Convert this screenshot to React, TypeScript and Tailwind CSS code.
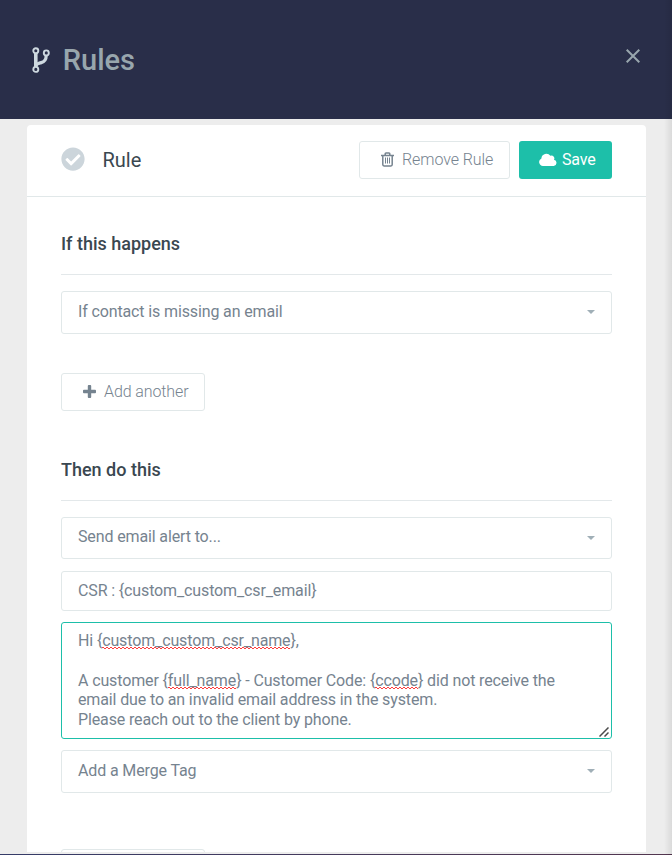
import type { ReactNode } from "react";
import { FaCheckCircle } from "react-icons/fa";

function BranchIcon() {
    return (
        <svg width="18" height="26" viewBox="0 0 18 26" fill="none" stroke="#ced9e0" className="shrink-0">
            <circle cx="3.8" cy="3.8" r="2.5" strokeWidth="1.9" />
            <circle cx="14.3" cy="5.9" r="2.5" strokeWidth="1.9" />
            <circle cx="3.8" cy="22.4" r="2.5" strokeWidth="1.9" />
            <path d="M3.8 6v14" strokeWidth="3.6" />
            <path d="M14.2 8.4c0 4.2-1.6 6.2-5 7.2-2.4.7-4.6 1-5.4 3" strokeWidth="3.2" />
        </svg>
    );
}

function TrashIcon() {
    return (
        <svg width="13" height="15" viewBox="0 0 13 15" fill="none" stroke="#75838f" strokeWidth="1.5" className="shrink-0">
            <path d="M0 3.5h13M4.2 3V1.7q0-.8.8-.8h3q.8 0 .8.8V3M1.8 3.6v9q0 1.4 1.2 1.4h7q1.2 0 1.2-1.4v-9" />
            <path d="M4.5 5.5v6M6.5 5.5v6M8.5 5.5v6" strokeWidth="1" />
        </svg>
    );
}

function CloudIcon() {
    return (
        <svg width="18" height="13" viewBox="0 0 18 13" fill="#fff" className="mb-px shrink-0">
            <path d="M4 13a4 4 0 0 1-1.6-7.6A5 5 0 0 1 11.4 2.8a2.8 2.8 0 0 1 3.6 3.9A3.2 3.2 0 0 1 14.7 13z" />
        </svg>
    );
}

function PlusIcon() {
    return (
        <svg width="13" height="13" viewBox="0 0 13 13" fill="#75838f" className="mb-0.5 shrink-0">
            <path d="M5.7 0h1.6q.9 0 .9.9v3.9h3.9q.9 0 .9.9v1.6q0 .9-.9.9H8.2v3.9q0 .9-.9.9H5.7q-.9 0-.9-.9V8.2H.9q-.9 0-.9-.9V5.7q0-.9.9-.9h3.9V.9q0-.9.9-.9z" />
        </svg>
    );
}

function SelectBox({ label, className }: { label: string; className: string }) {
    return (
        <button
            type="button"
            className={`flex w-full items-center justify-between rounded-[3px] border border-[#e1e8e9] pr-4 pb-0.5 pl-4 text-left ${className}`}
        >
            <span className="tracking-[-0.13px]">{label}</span>
            <svg width="8" height="4" viewBox="0 0 8 4" fill="#a0afb7" className="mt-px">
                <path d="M0 0h8L4 4z" />
            </svg>
        </button>
    );
}

function SectionTitle({ children }: { children: ReactNode }) {
    return (
        <h2 className="h-[43px] border-b border-[#e3e8ea] text-lg leading-6 font-medium text-[#3a4750]">
            {children}
        </h2>
    );
}

// spell checker squiggle: two rows of alternating dashes
function Misspelled({ children }: { children: ReactNode }) {
    return (
        <span className="bg-[repeating-linear-gradient(90deg,#ff3b3b_0_2px,transparent_2px_4px),repeating-linear-gradient(90deg,transparent_0_2px,#ff3b3b_2px_4px)] bg-[length:100%_1px,100%_1px] bg-[position:0_calc(100%-2px),0_calc(100%-1px)] bg-no-repeat">
            {children}
        </span>
    );
}

export default function App() {
    return (
        <div className="relative flex h-[855px] flex-col overflow-hidden bg-[#ededed] font-['Roboto',sans-serif] text-base text-[#76838f]">
            {/* HEADER */}
            <header className="flex h-[119px] shrink-0 items-center justify-between bg-[#292e49] pr-8 pl-8">
                <div className="flex items-center gap-[12.8px]">
                    <BranchIcon />
                    <h1 className="text-[29px] leading-9 font-medium text-[#98a6ad]">Rules</h1>
                </div>
                <button type="button" aria-label="Close" className="mb-[7px]">
                    <svg width="14" height="14" viewBox="0 0 14 14" stroke="#98a6ad" strokeWidth="2">
                        <path d="M.7.7l12.6 12.6M13.3.7L.7 13.3" />
                    </svg>
                </button>
            </header>

            {/* CARD */}
            <main className="mt-1.5 mr-[26px] ml-[27px] h-[727px] shrink-0 overflow-hidden rounded-t bg-white">
                <div className="flex h-[72px] items-center justify-between border-b border-[#e1e8e9] px-[34px] pb-0.5">
                    <div className="flex items-center gap-[18px]">
                        <FaCheckCircle size={24} color="#ccd5db" className="-ml-[0.5px] mb-px" />
                        <span className="text-xl text-[#3a4750]">Rule</span>
                    </div>
                    <div className="flex gap-[9px]">
                        <button
                            type="button"
                            className="flex h-[38px] w-[151px] items-center gap-2 rounded-[3px] border border-[#e1e8e9] pl-[21px] font-light tracking-[-0.08px]"
                        >
                            <TrashIcon />
                            Remove Rule
                        </button>
                        <button
                            type="button"
                            className="flex h-[38px] w-[93px] items-center gap-[5px] rounded-[3px] bg-[#1dbfa9] pl-5 tracking-[-0.13px] text-white"
                        >
                            <CloudIcon />
                            Save
                        </button>
                    </div>
                </div>

                <div className="px-[34px] pt-[35px]">
                    {/* CONDITION */}
                    <SectionTitle>If this happens</SectionTitle>
                    <SelectBox label="If contact is missing an email" className="mt-4 h-[43px]" />
                    <button
                        type="button"
                        className="mt-[39px] flex h-[38px] w-36 items-center gap-2 rounded-[3px] border border-[#e1e8e9] pl-[21px] font-light tracking-[-0.1px]"
                    >
                        <PlusIcon />
                        Add another
                    </button>

                    {/* ACTION */}
                    <div className="mt-[47px]">
                        <SectionTitle>Then do this</SectionTitle>
                        <SelectBox label="Send email alert to..." className="mt-4 h-[42px]" />
                        <div className="mt-3 flex h-10 items-center rounded-[3px] border border-[#e1e8e9] px-4 tracking-[-0.13px]">
                            {"CSR : {custom_custom_csr_email}"}
                        </div>
                        <div className="relative mt-[11px] h-[117px] rounded-[3px] border border-[#1dbfa9] px-4 pt-[8.2px] leading-[19.7px] tracking-[-0.13px] whitespace-pre">
                            <p>Hi {"{"}<Misspelled>custom_custom_csr_name</Misspelled>{"},"}</p>
                            <br />
                            <p>
                                A customer {"{"}<Misspelled>full_name</Misspelled>{"} - Customer Code: {"}
                                <Misspelled>ccode</Misspelled>{"} did not receive the"}
                            </p>
                            <p>email due to an invalid email address in the system.</p>
                            <p>Please reach out to the client by phone.</p>
                            <svg
                                width="10"
                                height="10"
                                viewBox="0 0 10 10"
                                stroke="#4b4b4b"
                                strokeWidth="1.5"
                                className="absolute right-0.5 bottom-px"
                            >
                                <path d="M.5 9.5l9-9M5.5 9.5l4-4" />
                            </svg>
                        </div>
                        <SelectBox label="Add a Merge Tag" className="mt-[11px] h-[43px]" />
                        <button
                            type="button"
                            aria-label="Add another action"
                            className="mt-14 block h-[38px] w-36 rounded-[3px] border border-[#e1e8e9]"
                        />
                    </div>
                </div>
            </main>

            <div className="mt-0.5 h-px shrink-0 bg-linear-to-r from-[#353c68] to-[#53364f]" />
            <div className="pointer-events-none absolute top-0 right-0 h-full w-2 bg-linear-to-r from-transparent to-black/8" />
        </div>
    );
}
